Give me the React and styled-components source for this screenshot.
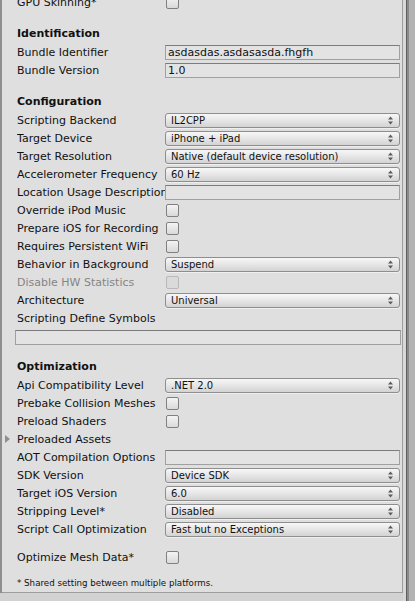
import React from 'react'
import styled, { createGlobalStyle } from 'styled-components'

const Global = createGlobalStyle`
  html, body { margin: 0; padding: 0; background: #d4d4d4; overflow: hidden; }
  body { font-family: "DejaVu Sans", "Liberation Sans", sans-serif; font-size: 11px; color: #111; }
`

const Window = styled.div`
  width: 415px;
  height: 601px;
  display: flex;
  background: #d2d2d2;
  overflow: hidden;
`

const LeftEdge = styled.div`
  width: 2px;
  height: 593px;
  background: #8e8e8e;
  flex: none;
`

const Panel = styled.div`
  width: 401px;
  height: 593px;
  flex: none;
  background: #dfdfdf;
  border-right: 1px solid #9d9d9d;
  border-bottom: 1px solid #9d9d9d;
  box-sizing: border-box;
  padding: 0 2px 0 15px;
  overflow: hidden;
`

const Gutter = styled.div`
  width: 3px;
  flex: none;
  background: #d8d8d8;
`

const Scrollbar = styled.div`
  flex: 1;
  border-left: 1px solid #5e5e5e;
  background: linear-gradient(to right, #8a8a8a 0 2px, #b3b3b3 2px);
`

const Content = styled.div`
  margin-top: -7px;
`

const Header = styled.div`
  font-weight: bold;
  height: 19px;
  line-height: 19px;
  margin-top: ${p => p.$gap || 13}px;
`

const Row = styled.div`
  position: relative;
  display: flex;
  align-items: center;
  height: 18px;
  margin-top: ${p => p.$gap || 0}px;
`

const Label = styled.div`
  width: 148px;
  flex: none;
  white-space: nowrap;
  overflow: hidden;
  color: ${p => (p.$disabled ? '#858585' : '#111')};
`

const Foldout = styled.span`
  position: absolute;
  left: -12px;
  top: 5px;
  width: 0;
  height: 0;
  border-top: 4px solid transparent;
  border-bottom: 4px solid transparent;
  border-left: 5px solid #8f8f8f;
`

const Popup = styled.div`
  width: 236px;
  height: 15px;
  box-sizing: border-box;
  border: 1px solid #8e8e8e;
  border-radius: 3px;
  background: linear-gradient(#f7f7f7, #e6e6e6 50%, #d3d3d3);
  display: flex;
  align-items: center;
  justify-content: space-between;
  padding: 0 6px 0 5px;
  font-size: 10px;
  box-shadow: 0 1px 0 rgba(255, 255, 255, 0.5);
`

const Field = styled.div`
  width: ${p => p.$wide ? 386 : 236}px;
  margin-left: ${p => p.$wide ? -2 : 0}px;
  height: 15px;
  box-sizing: border-box;
  border: 1px solid #a0a0a0;
  border-top-color: #7c7c7c;
  background: #e3e3e3;
  padding-left: 2px;
  line-height: 13px;
  white-space: nowrap;
  overflow: hidden;
`

const WideField = styled(Field)`
  margin-top: 3px;
`

const Box = styled.div`
  width: 13px;
  height: 13px;
  margin-left: 1px;
  box-sizing: border-box;
  border: 1px solid ${p => (p.$disabled ? '#b9b9b9' : '#808080')};
  border-radius: 2px;
  background: ${p =>
    p.$disabled ? '#dadada' : 'linear-gradient(#f4f4f4, #d9d9d9)'};
`

const Footnote = styled.div`
  font-size: 8.7px;
  height: 12px;
  line-height: 12px;
  margin-top: 11px;
  color: #111;
`

const Arrows = () => (
  <svg width="5" height="9" viewBox="0 0 5 9">
    <polygon points="0,3.5 2.5,0.5 5,3.5" fill="#5a5a5a" />
    <polygon points="0,5.5 2.5,8.5 5,5.5" fill="#5a5a5a" />
  </svg>
)

const Select = ({ value }) => (
  <Popup>
    <span>{value}</span>
    <Arrows />
  </Popup>
)

const config = [
  { label: 'Scripting Backend', select: 'IL2CPP' },
  { label: 'Target Device', select: 'iPhone + iPad' },
  { label: 'Target Resolution', select: 'Native (default device resolution)' },
  { label: 'Accelerometer Frequency', select: '60 Hz' },
  { label: 'Location Usage Description', field: '' },
  { label: 'Override iPod Music', check: true },
  { label: 'Prepare iOS for Recording', check: true },
  { label: 'Requires Persistent WiFi', check: true },
  { label: 'Behavior in Background', select: 'Suspend' },
  { label: 'Disable HW Statistics', check: true, disabled: true },
  { label: 'Architecture', select: 'Universal' },
  { label: 'Scripting Define Symbols' },
]

const optimization = [
  { label: 'Api Compatibility Level', select: '.NET 2.0' },
  { label: 'Prebake Collision Meshes', check: true },
  { label: 'Preload Shaders', check: true },
  { label: 'Preloaded Assets', foldout: true },
  { label: 'AOT Compilation Options', field: '' },
  { label: 'SDK Version', select: 'Device SDK' },
  { label: 'Target iOS Version', select: '6.0' },
  { label: 'Stripping Level*', select: 'Disabled' },
  { label: 'Script Call Optimization', select: 'Fast but no Exceptions' },
]

const Setting = ({ item }) => (
  <Row>
    {item.foldout && <Foldout />}
    <Label $disabled={item.disabled}>{item.label}</Label>
    {item.select !== undefined && <Select value={item.select} />}
    {item.field !== undefined && <Field>{item.field}</Field>}
    {item.check && <Box $disabled={item.disabled} />}
  </Row>
)

export default function App() {
  return (
    <Window>
      <Global />
      <LeftEdge />
      <Panel>
        <Content>
          <Row>
            <Label>GPU Skinning*</Label>
            <Box />
          </Row>

          <Header>Identification</Header>
          <Row>
            <Label>Bundle Identifier</Label>
            <Field>asdasdas.asdasasda.fhgfh</Field>
          </Row>
          <Row>
            <Label>Bundle Version</Label>
            <Field>1.0</Field>
          </Row>

          <Header>Configuration</Header>
          {config.map(item => (
            <Setting key={item.label} item={item} />
          ))}
          <WideField $wide />

          <Header $gap={12}>Optimization</Header>
          {optimization.map(item => (
            <Setting key={item.label} item={item} />
          ))}

          <Row $gap={10}>
            <Label>Optimize Mesh Data*</Label>
            <Box />
          </Row>
          <Footnote>* Shared setting between multiple platforms.</Footnote>
        </Content>
      </Panel>
      <Gutter />
      <Scrollbar />
    </Window>
  )
}
